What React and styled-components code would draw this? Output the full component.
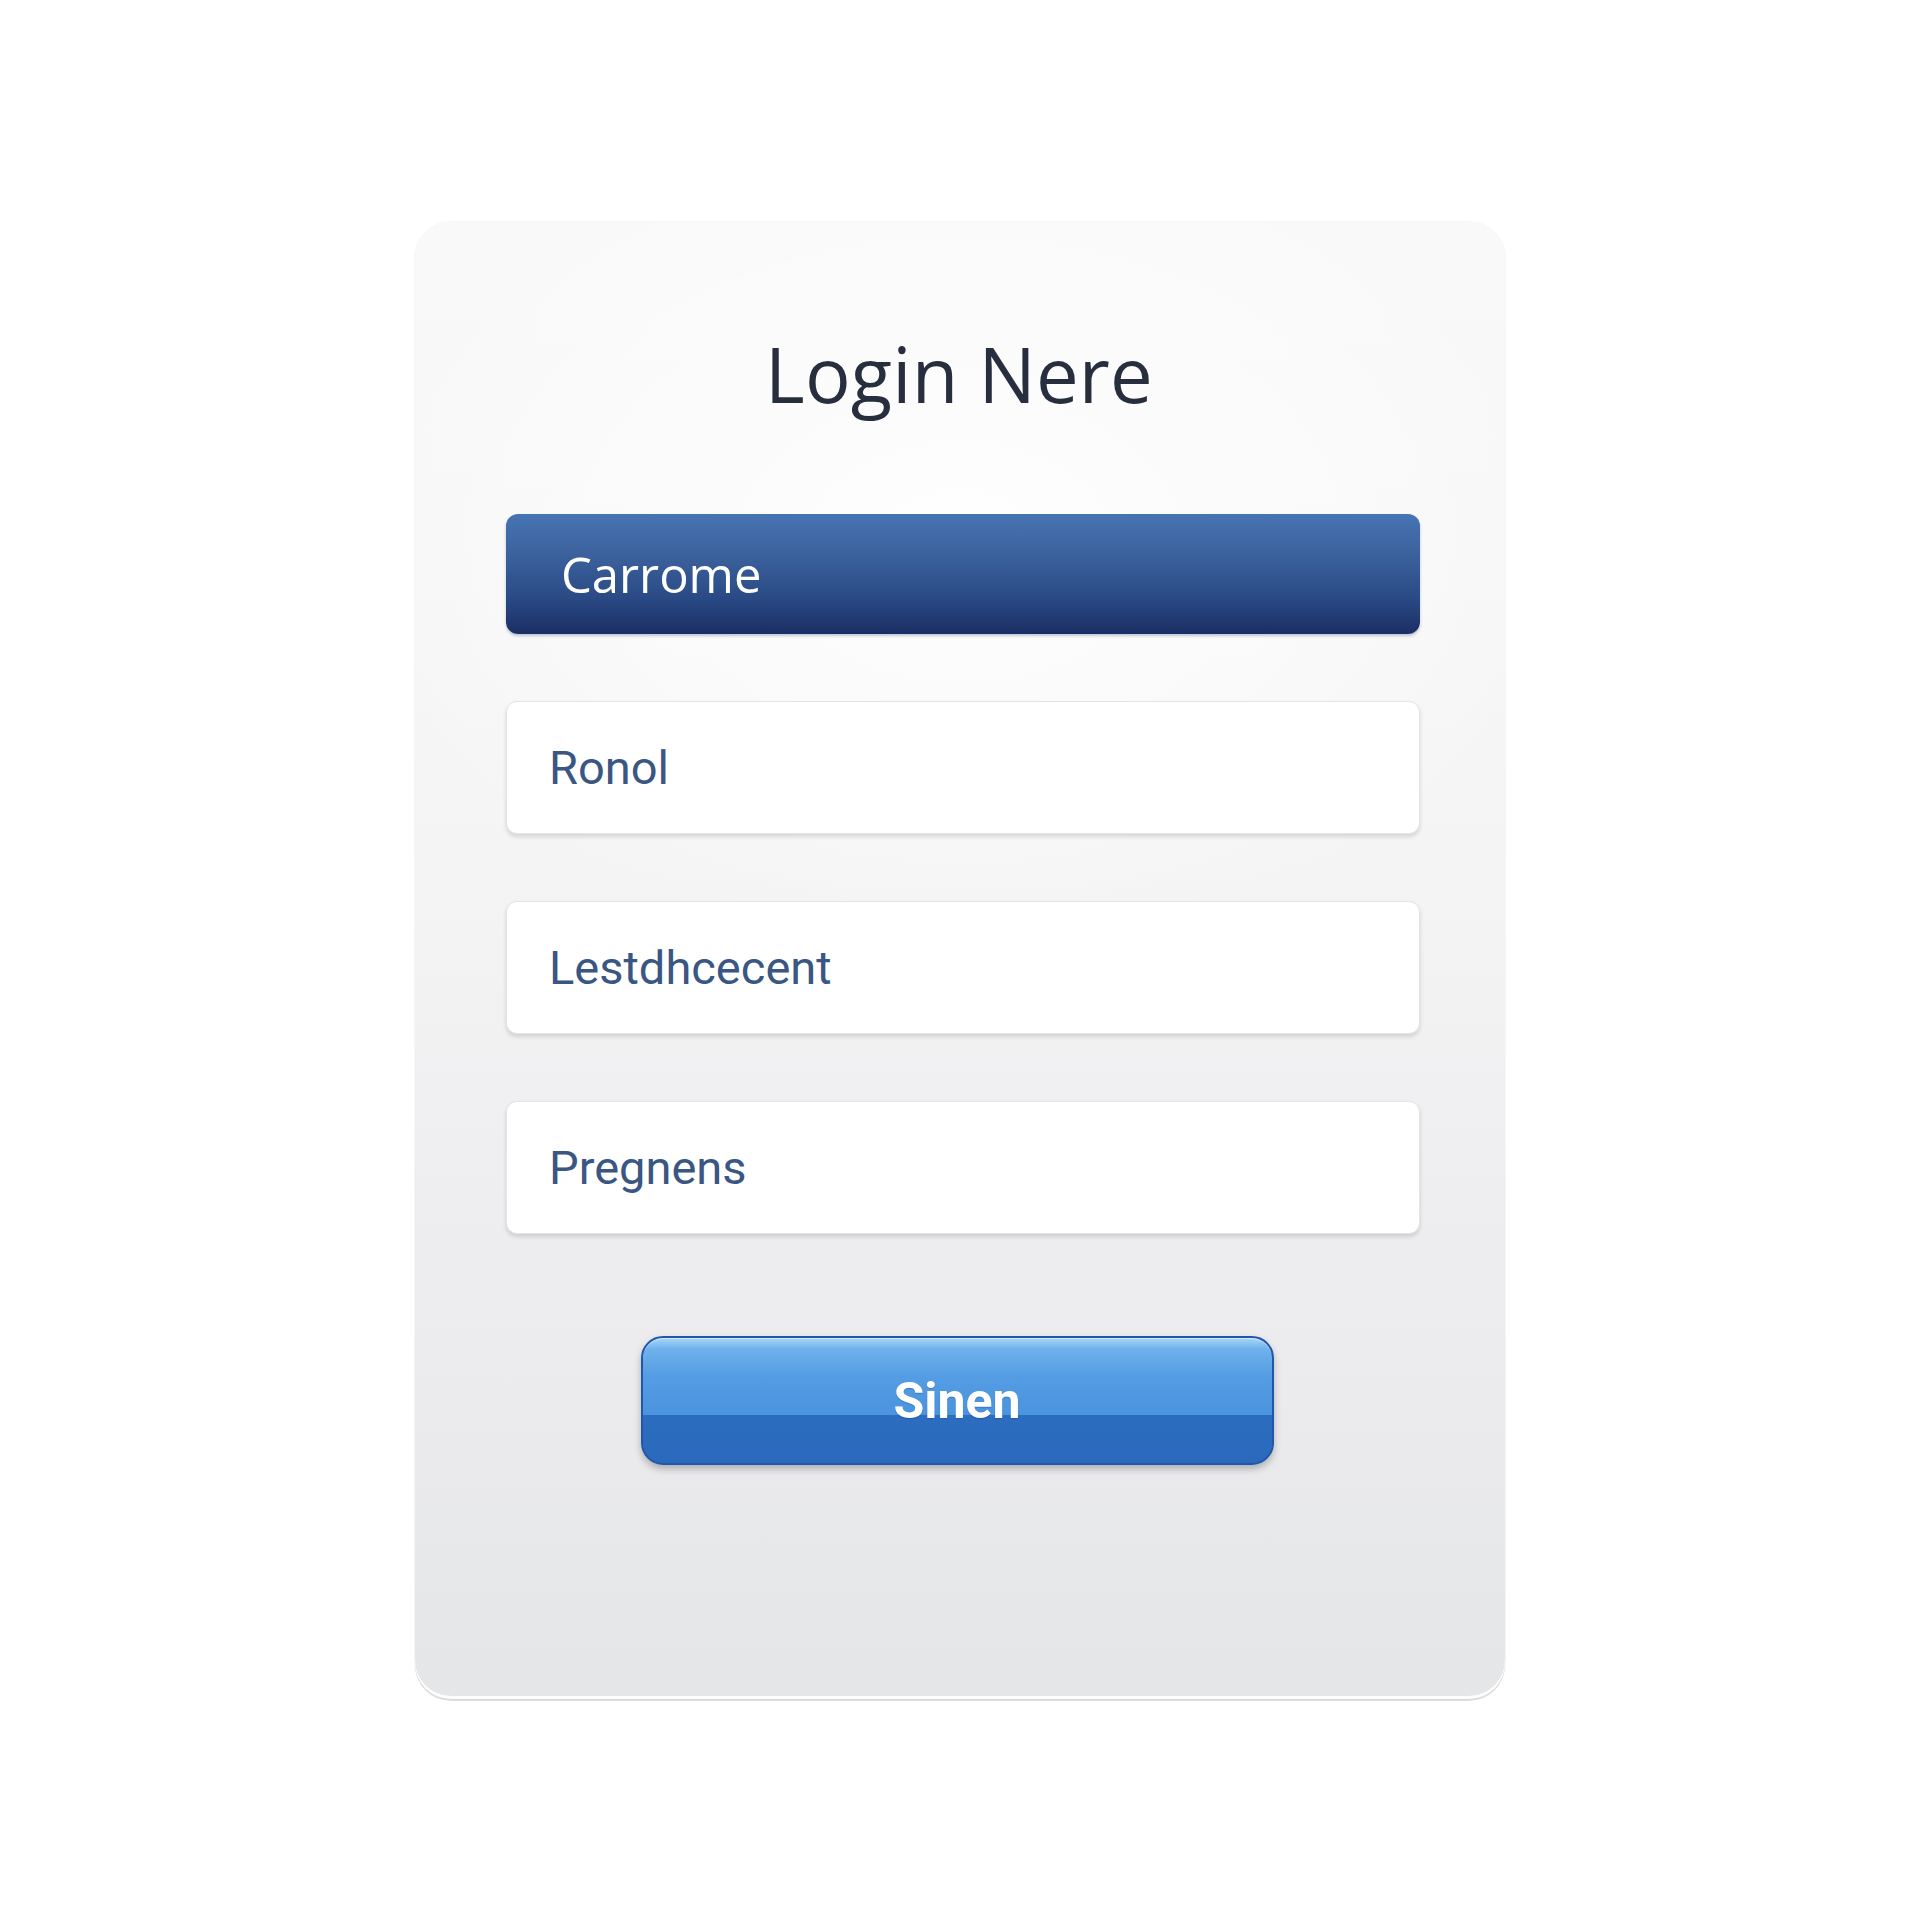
import React from 'react';
import styled, { createGlobalStyle } from 'styled-components';

const GlobalStyle = createGlobalStyle`
  html, body {
    margin: 0;
    padding: 0;
    background: #ffffff;
  }
  body {
    font-family: "Open Sans", "Noto Sans", sans-serif;
  }
`;

const fields = ['Ronol', 'Lestdhcecent', 'Pregnens'];

const App = () => {
  return (
    <Page>
      <GlobalStyle />
      <Card>
        <Title>Login Nere</Title>
        <Form>
          <Banner>Carrome</Banner>
          {fields.map((label) => (
            <Field key={label}>{label}</Field>
          ))}
        </Form>
        <SubmitButton type="button">
          <span>Sinen</span>
        </SubmitButton>
      </Card>
    </Page>
  );
};

const Page = styled.div`
  display: flex;
  justify-content: center;
  align-items: flex-start;
  padding-top: 222px;
  min-height: 1920px;
  box-sizing: border-box;
`;

const Card = styled.div`
  width: 1090px;
  box-sizing: border-box;
  padding: 114px 85px 234px 91px;
  border-radius: 36px;
  display: flex;
  flex-direction: column;
  align-items: center;
  background:
    radial-gradient(ellipse 620px 420px at 50% 22%, rgba(255, 255, 255, 0.95), rgba(255, 255, 255, 0) 100%),
    linear-gradient(180deg, #f9f9f9 0%, #f5f5f6 40%, #ececee 75%, #e5e6e8 100%);
  box-shadow:
    inset 0 -3px 0 rgba(255, 255, 255, 0.9),
    0 0 0 1px rgba(0, 0, 0, 0.035),
    0 2px 0 rgba(0, 0, 0, 0.12);
`;

const Title = styled.h1`
  margin: 0 8px 102px 0;
  font-family: "Open Sans", sans-serif;
  font-weight: 400;
  font-size: 76px;
  line-height: 76px;
  color: #272f3f;
  letter-spacing: 0.2px;
`;

const Form = styled.div`
  align-self: stretch;
  display: flex;
  flex-direction: column;
  gap: 67px;
`;

const Banner = styled.div`
  height: 120px;
  box-sizing: border-box;
  display: flex;
  align-items: center;
  padding-left: 55px;
  border-radius: 12px;
  background: linear-gradient(180deg, #4774b3 0%, #3d649f 30%, #2a4a85 70%, #1b2e64 100%);
  box-shadow: 0 2px 3px rgba(20, 40, 90, 0.25);
  color: #ffffff;
  font-family: "Open Sans", sans-serif;
  font-size: 49px;
  font-weight: 400;
`;

const Field = styled.div`
  height: 133px;
  box-sizing: border-box;
  display: flex;
  align-items: center;
  padding-left: 42px;
  border-radius: 11px;
  background: #ffffff;
  border: 1px solid #e4e4e6;
  box-shadow: 0 3px 4px rgba(0, 0, 0, 0.13);
  color: #3a5682;
  font-family: Roboto, "Noto Sans", sans-serif;
  font-size: 47px;
`;

const SubmitButton = styled.button`
  margin: 102px 12px 0 0;
  width: 633px;
  height: 129px;
  box-sizing: border-box;
  border: 2px solid #2356a8;
  border-radius: 22px;
  background: linear-gradient(
    180deg,
    #a6d6f7 0%,
    #6eb1ec 9%,
    #559de3 30%,
    #4a93de 62%,
    #2c6dbf 62%,
    #2a69bb 100%
  );
  box-shadow:
    inset 0 1px 0 rgba(255, 255, 255, 0.5),
    0 4px 7px rgba(0, 0, 0, 0.25);
  color: #ffffff;
  font-family: Roboto, "Liberation Sans", sans-serif;
  font-weight: 700;
  font-size: 50px;
  display: flex;
  align-items: center;
  justify-content: center;
  padding: 0;
  cursor: pointer;

  span {
    text-shadow: 0 1px 1px rgba(20, 60, 130, 0.35);
  }
`;

export default App;
